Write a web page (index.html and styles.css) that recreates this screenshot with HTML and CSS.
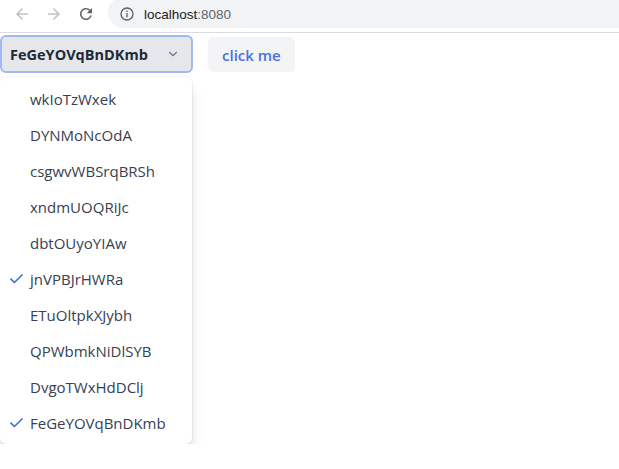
FILE: index.html
```html
<!DOCTYPE html>
<html>
<head>
<meta charset="utf-8">
<link rel="stylesheet" href="styles.css">
</head>
<body>
<div class="toolbar">
  <div class="navs">
    <svg class="nav" width="18" height="18" viewBox="0 0 24 24"><path d="M20 11H7.83l5.59-5.59L12 4l-8 8 8 8 1.41-1.41L7.83 13H20v-2z" fill="#bdc1c6"/></svg>
    <svg class="nav" width="18" height="18" viewBox="0 0 24 24"><path d="M12 4l-1.41 1.41L16.17 11H4v2h12.17l-5.58 5.59L12 20l8-8z" fill="#bdc1c6"/></svg>
    <svg class="nav" width="18" height="18" viewBox="0 0 24 24"><path d="M17.65 6.35A7.958 7.958 0 0 0 12 4c-4.42 0-7.99 3.58-7.99 8s3.57 8 7.99 8c3.730 0 6.84-2.55 7.73-6h-2.08A5.99 5.99 0 0 1 12 18c-3.31 0-6-2.690-6-6s2.69-6 6-6c1.66 0 3.14.69 4.22 1.78L13 11h7V4l-2.35 2.35z" fill="#5f6368"/></svg>
  </div>
  <div class="omnibox">
    <svg width="16" height="16" viewBox="0 0 24 24"><circle cx="12" cy="12" r="9" fill="none" stroke="#5f6368" stroke-width="2"/><rect x="11" y="10.5" width="2" height="6.5" fill="#5f6368"/><rect x="11" y="7" width="2" height="2" fill="#5f6368"/></svg>
    <span class="url"><span class="host">localhost</span><span class="port">:8080</span></span>
  </div>
</div>
<div class="page">
  <div class="select-col">
    <button class="select">
      <span>FeGeYOVqBnDKmb</span>
      <svg width="14" height="14" viewBox="0 0 20 20"><path d="M5 7.5l5 5 5-5" fill="none" stroke="#6b7280" stroke-width="1.6" stroke-linecap="round" stroke-linejoin="round"/></svg>
    </button>
    <ul class="menu">
      <li><span class="check"></span><span>wkIoTzWxek</span></li>
      <li><span class="check"></span><span>DYNMoNcOdA</span></li>
      <li><span class="check"></span><span>csgwvWBSrqBRSh</span></li>
      <li><span class="check"></span><span>xndmUOQRiJc</span></li>
      <li><span class="check"></span><span>dbtOUyoYIAw</span></li>
      <li><span class="check"><svg width="13" height="10" viewBox="0 0 13 10"><path d="M1 5.2l3.4 3.3L12 1" fill="none" stroke="#3b6ee8" stroke-width="1.7" stroke-linecap="round" stroke-linejoin="round"/></svg></span><span>jnVPBJrHWRa</span></li>
      <li><span class="check"></span><span>ETuOltpkXJybh</span></li>
      <li><span class="check"></span><span>QPWbmkNiDlSYB</span></li>
      <li><span class="check"></span><span>DvgoTWxHdDClj</span></li>
      <li><span class="check"><svg width="13" height="10" viewBox="0 0 13 10"><path d="M1 5.2l3.4 3.3L12 1" fill="none" stroke="#3b6ee8" stroke-width="1.7" stroke-linecap="round" stroke-linejoin="round"/></svg></span><span>FeGeYOVqBnDKmb</span></li>
    </ul>
  </div>
  <button class="btn">click me</button>
</div>
</body>
</html>
```
FILE: styles.css
```css
html, body {
  margin: 0;
  padding: 0;
  background: #fff;
  font-family: "Open Sans", "Noto Sans", sans-serif;
}
.toolbar {
  height: 33px;
  border-bottom: 1px solid #dadce0;
  display: flex;
  align-items: flex-start;
  box-sizing: border-box;
}
.navs {
  display: flex;
  align-items: center;
  height: 27px;
  padding-left: 13px;
  gap: 14px;
  width: 95px;
}
.nav { display: block; }
.omnibox {
  margin-top: -3px;
  height: 31px;
  flex: 1;
  background: #f1f3f4;
  border-radius: 16px 0 0 16px;
  display: flex;
  align-items: center;
  padding: 3px 0 0 11px;
  box-sizing: border-box;
  gap: 9px;
}
.omnibox svg { display: block; }
.url {
  font-family: "Liberation Sans", Arial, sans-serif;
  font-size: 13.5px;
}
.host { color: #202124; }
.port { color: #5f6368; }
.page {
  padding-top: 2px;
  display: flex;
  align-items: flex-start;
  gap: 15px;
}
.select-col {
  display: flex;
  flex-direction: column;
  gap: 4px;
  width: 193px;
}
.select {
  width: 193px;
  height: 38px;
  box-sizing: border-box;
  border: 2px solid #a2b8f4;
  border-radius: 6px;
  background: #e5e7eb;
  display: flex;
  align-items: center;
  justify-content: space-between;
  padding: 0 11px 0 8px;
  font-family: "Open Sans", "Noto Sans", sans-serif;
  font-size: 14.5px;
  font-weight: 700;
  color: #1f2937;
  margin: 0;
}
.select svg { display: block; }
.btn {
  margin-top: 2px;
  height: 35px;
  padding: 0 14px;
  border: none;
  border-radius: 6px;
  background: #f3f4f6;
  color: #4a70e2;
  font-family: "Open Sans", "Noto Sans", sans-serif;
  font-size: 15px;
  font-weight: 600;
}
.menu {
  width: 192px;
  box-sizing: border-box;
  margin: 0;
  padding: 4px 0 3px;
  list-style: none;
  background: #fff;
  border-radius: 6px;
  box-shadow: 0 10px 15px -3px rgba(0,0,0,0.15), 0 4px 6px -2px rgba(0,0,0,0.08), 0 0 0 1px rgba(0,0,0,0.04);
}
.menu li {
  height: 36px;
  display: flex;
  align-items: center;
  font-size: 15px;
  color: #374151;
  padding-left: 10px;
}
.check {
  width: 20px;
  display: flex;
  align-items: center;
}
.check svg { display: block; }
```
